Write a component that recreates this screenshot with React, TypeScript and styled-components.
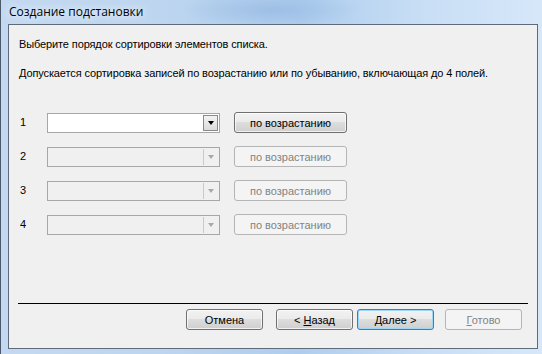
import React from 'react';
import styled, { createGlobalStyle, css } from 'styled-components';

const Global = createGlobalStyle`
  html, body { margin: 0; padding: 0; }
  body {
    width: 542px; height: 354px; overflow: hidden;
    font-family: "Liberation Sans", Arial, sans-serif;
    font-size: 11px; color: #000;
  }
`;

const Window = styled.div`
  width: 542px; height: 354px; box-sizing: border-box;
  display: flex; flex-direction: column;
  background:
    radial-gradient(ellipse 90px 18px at 270px 10px, rgba(150,185,225,0.7), rgba(150,185,225,0) 100%),
    linear-gradient(90deg, #c4d9f1 0%, #bdd5ef 30%, #aecdee 55%, #c8def5 78%, #d6e7f9 100%);
  border-left: 1px solid #4a5a6b;
  padding: 0 4px 5px 7px;
`;

const TitleBar = styled.div`
  height: 24px; flex: none;
  display: flex; align-items: center;
  padding-left: 1px;
`;

const Title = styled.span`
  font-family: "Open Sans", "Noto Sans", sans-serif;
  font-size: 12px; color: #000;
  text-shadow: 0 0 6px #e8f2fc, 0 0 10px #e8f2fc;
  padding-bottom: 2px;
`;

const Panel = styled.div`
  flex: 1;
  display: flex; flex-direction: column;
  background: #f0f0f0;
  border: 1px solid #5f6b79;
`;

const Intro = styled.div`
  padding: 12px 10px 0 10px;
  display: flex; flex-direction: column; gap: 15px;
`;

const Line = styled.div`
  line-height: 14px; height: 14px; white-space: nowrap;
  letter-spacing: -0.12px;
`;

const Rows = styled.div`
  margin-top: 32px;
  padding-left: 11px;
  display: flex; flex-direction: column; gap: 13px;
`;

const Row = styled.div`
  display: flex; align-items: center; height: 21px;
`;

const Num = styled.span`
  width: 27px; flex: none; line-height: 14px;
  margin-top: -2px;
`;

const Combo = styled.div<{ $disabled?: boolean }>`
  width: 173px; height: 20px; box-sizing: border-box;
  display: flex; justify-content: flex-end;
  border: 1px solid #a7a7a7;
  background: ${p => (p.$disabled ? '#f0f0f0' : '#fff')};
  margin-right: 14px;
  padding: 1px;
`;

const DropBtn = styled.div<{ $disabled?: boolean }>`
  width: 15px; height: 100%; box-sizing: border-box;
  display: flex; align-items: center; justify-content: center;
  ${p => p.$disabled
    ? css`border-left: 1px solid #c9c9c9; background: #f0f0f0;`
    : css`border: 1px solid #8a8a8a; background: linear-gradient(#f3f3f3, #dcdcdc);`}
`;

const Arrow = styled.span<{ $disabled?: boolean }>`
  width: 0; height: 0;
  border-left: 3.5px solid transparent;
  border-right: 3.5px solid transparent;
  border-top: 4px solid ${p => (p.$disabled ? '#a8a8a8' : '#000')};
  margin-top: 1px;
`;

const Button = styled.button<{ $w?: number; $disabled?: boolean; $default?: boolean }>`
  width: ${p => p.$w ?? 77}px; height: 21px; box-sizing: border-box;
  font-family: "Liberation Sans", Arial, sans-serif; font-size: 11px;
  padding: 0; margin: 0;
  border-radius: 3px;
  display: flex; align-items: center; justify-content: center;
  color: #000;
  border: 1px solid #707070;
  background: linear-gradient(#f2f2f2 0%, #ebebeb 45%, #dddddd 50%, #cfcfcf 100%);
  box-shadow: inset 0 0 0 1px rgba(255,255,255,0.7);
  ${p => p.$default && css`
    border-color: #3c7fb1;
    box-shadow: inset 0 0 0 1px #9fd5f5;
  `}
  ${p => p.$disabled && css`
    color: #838383;
    border-color: #b5b5b5;
    background: #f4f4f4;
    box-shadow: none;
  `}
  u { text-decoration: underline; }
`;

const Label = styled.span` white-space: pre; `;

const Spacer = styled.div` flex: 1; `;

const Separator = styled.div`
  height: 1px; background: #000;
  margin: 0 9px 0 9px;
`;

const Footer = styled.div`
  display: flex; justify-content: flex-end; align-items: center;
  margin: 5px 15px 18px 0;
`;

const Gap = styled.span<{ $w: number }>` width: ${p => p.$w}px; flex: none; `;

export default function App() {
  const rows = [1, 2, 3, 4];
  return (
    <>
      <Global />
      <Window>
        <TitleBar>
          <Title>Создание подстановки</Title>
        </TitleBar>
        <Panel>
          <Intro>
            <Line>Выберите порядок сортировки элементов списка.</Line>
            <Line>Допускается сортировка записей по возрастанию или по убыванию, включающая до 4 полей.</Line>
          </Intro>
          <Rows>
            {rows.map(n => {
              const dis = n !== 1;
              return (
                <Row key={n}>
                  <Num>{n}</Num>
                  <Combo $disabled={dis}>
                    <DropBtn $disabled={dis}><Arrow $disabled={dis} /></DropBtn>
                  </Combo>
                  <Button $w={113} $disabled={dis}><Label>по возрастанию</Label></Button>
                </Row>
              );
            })}
          </Rows>
          <Spacer />
          <Separator />
          <Footer>
            <Button><Label>Отмена</Label></Button>
            <Gap $w={13} />
            <Button><Label>{'< '}<u>Н</u>азад</Label></Button>
            <Gap $w={4} />
            <Button $default><Label><u>Д</u>{'алее >'}</Label></Button>
            <Gap $w={11} />
            <Button $disabled><Label><u>Г</u>отово</Label></Button>
          </Footer>
        </Panel>
      </Window>
    </>
  );
}
